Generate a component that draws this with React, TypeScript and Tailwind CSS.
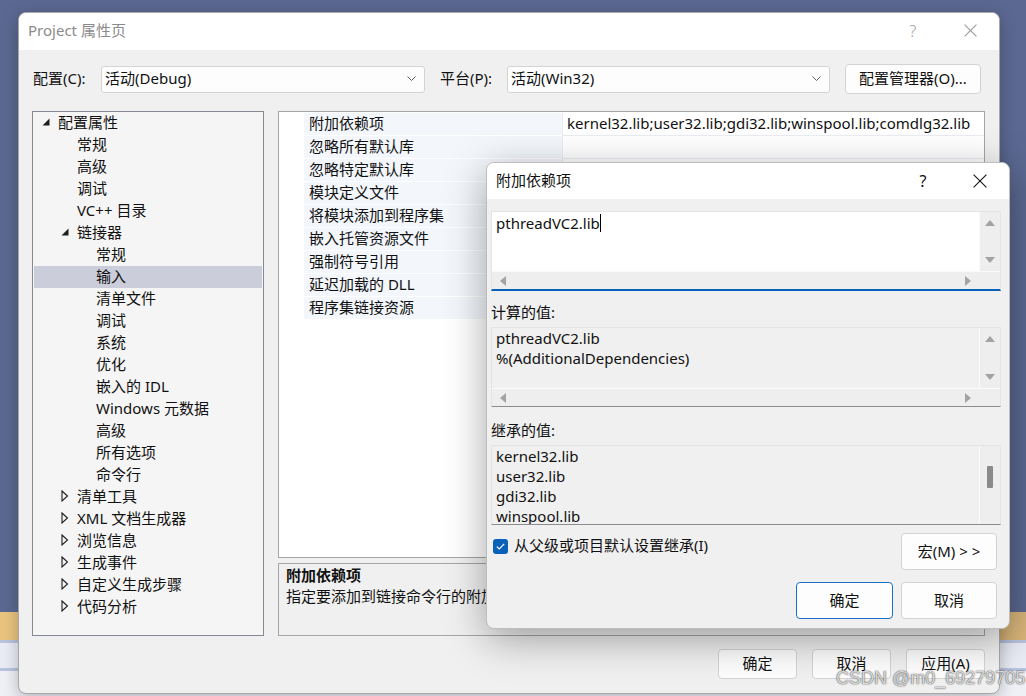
import React from 'react';

// tree rows of the property page
type TreeRow = { t: string; lv: 1 | 2 | 3; tri?: 'open' | 'closed'; sel?: boolean };

const tree: TreeRow[] = [
  { t: '配置属性', lv: 1, tri: 'open' },
  { t: '常规', lv: 2 },
  { t: '高级', lv: 2 },
  { t: '调试', lv: 2 },
  { t: 'VC++ 目录', lv: 2 },
  { t: '链接器', lv: 2, tri: 'open' },
  { t: '常规', lv: 3 },
  { t: '输入', lv: 3, sel: true },
  { t: '清单文件', lv: 3 },
  { t: '调试', lv: 3 },
  { t: '系统', lv: 3 },
  { t: '优化', lv: 3 },
  { t: '嵌入的 IDL', lv: 3 },
  { t: 'Windows 元数据', lv: 3 },
  { t: '高级', lv: 3 },
  { t: '所有选项', lv: 3 },
  { t: '命令行', lv: 3 },
  { t: '清单工具', lv: 2, tri: 'closed' },
  { t: 'XML 文档生成器', lv: 2, tri: 'closed' },
  { t: '浏览信息', lv: 2, tri: 'closed' },
  { t: '生成事件', lv: 2, tri: 'closed' },
  { t: '自定义生成步骤', lv: 2, tri: 'closed' },
  { t: '代码分析', lv: 2, tri: 'closed' },
];

const props = [
  '附加依赖项',
  '忽略所有默认库',
  '忽略特定默认库',
  '模块定义文件',
  '将模块添加到程序集',
  '嵌入托管资源文件',
  '强制符号引用',
  '延迟加载的 DLL',
  '程序集链接资源',
];

const indent: Record<number, string> = { 1: 'pl-[9px]', 2: 'pl-[28px]', 3: 'pl-[47px]' };

function Triangle({ kind }: { kind?: 'open' | 'closed' }) {
  if (kind === 'open') {
    return (
      <svg width="8" height="8" viewBox="0 0 8 8">
        <polygon points="7.5,0.5 7.5,7.5 0.5,7.5" fill="#1e1e1e" />
      </svg>
    );
  }
  if (kind === 'closed') {
    return (
      <svg width="8" height="12" viewBox="0 0 8 12">
        <polygon points="1,1 6.5,6 1,11" fill="none" stroke="#1e1e1e" strokeWidth="1.1" />
      </svg>
    );
  }
  return null;
}

function CloseIcon({ color, size }: { color: string; size: number }) {
  return (
    <svg width={size} height={size} viewBox="0 0 12 12">
      <path d="M0.5 0.5 L11.5 11.5 M11.5 0.5 L0.5 11.5" stroke={color} strokeWidth="1" />
    </svg>
  );
}

function Chevron() {
  return (
    <svg width="9" height="5" viewBox="0 0 9 5">
      <polyline points="0.5,0.5 4.5,4.5 8.5,0.5" fill="none" stroke="#5a5a5a" strokeWidth="1" />
    </svg>
  );
}

function Arrow({ dir }: { dir: 'up' | 'down' | 'left' | 'right' }) {
  const pts = {
    up: '0,6 5,0 10,6',
    down: '0,0 10,0 5,6',
    left: '6,0 6,10 0,5',
    right: '0,0 0,10 6,5',
  }[dir];
  const vertical = dir === 'up' || dir === 'down';
  return (
    <svg width={vertical ? 10 : 6} height={vertical ? 6 : 10} viewBox={vertical ? '0 0 10 6' : '0 0 6 10'}>
      <polygon points={pts} fill="#a3a3a3" />
    </svg>
  );
}

function Combo({ value, w }: { value: string; w: string }) {
  return (
    <div className={`${w} h-[27px] bg-[#fdfdfd] border border-[#d4d4d4] rounded-[3px] flex items-center pl-[3px] pr-[8px] pb-[2px]`}>
      <span className="flex-1">{value}</span>
      <Chevron />
    </div>
  );
}

function Btn({ label, w, h, primary }: { label: string; w: string; h: string; primary?: boolean }) {
  return (
    <div
      className={`${w} ${h} flex items-center justify-center pb-[1px] rounded-[4px] bg-[#fdfdfd] border ${
        primary ? 'border-[#1a6fc4]' : 'border-[#d3d3d3]'
      }`}
    >
      {label}
    </div>
  );
}

function ScrollBox({
  lines,
  editable,
  hscroll,
  thumb,
}: {
  lines: string[];
  editable?: boolean;
  hscroll?: boolean;
  thumb?: boolean;
}) {
  return (
    <div
      className={`h-[80px] flex flex-col border border-[#e4e4e4] overflow-hidden ${
        editable ? 'border-b-2 border-b-[#0a62b8]' : 'border-b-[#8c8c8c]'
      }`}
    >
      <div className="flex-1 flex min-h-0">
        <div className={`flex-1 pl-[4px] leading-[20px] overflow-hidden ${editable ? 'bg-white pt-px' : 'bg-[#f0f0f0]'}`}>
          {lines.map((l, i) => (
            <div key={i} className="whitespace-nowrap flex items-center">
              {l}
              {editable && i === 0 && <span className="inline-block w-px h-[18px] bg-black" />}
            </div>
          ))}
        </div>
        <div className="w-[21px] bg-[#eeeeee] border-l border-[#fafafa] flex flex-col items-center justify-between py-[8px]">
          {thumb ? (
            <div className="w-[6px] h-[22px] bg-[#8a8a8a] rounded-[1px] mt-[12px]" />
          ) : (
            <>
              <Arrow dir="up" />
              <Arrow dir="down" />
            </>
          )}
        </div>
      </div>
      {hscroll && (
        <div className="h-[18px] flex bg-[#eeeeee] border-t border-[#fafafa]">
          <div className="flex-1 flex items-center justify-between px-[8px]">
            <Arrow dir="left" />
            <Arrow dir="right" />
          </div>
          <div className="w-[21px]" />
        </div>
      )}
    </div>
  );
}

function MainWindow() {
  return (
    <div className="absolute left-[18px] top-[12px] w-[982px] h-[682px] rounded-[8px] border border-[#a7a7a7] bg-[#f0f0f0] overflow-hidden flex flex-col shadow-[0_4px_16px_rgba(0,0,0,0.25)]">
      <div className="h-[37px] bg-white flex items-center pl-[9px] pb-[2px] shrink-0">
        <span className="text-[#8b8b8b]">Project 属性页</span>
        <div className="ml-auto mr-[6px] flex gap-[11px]">
          <div className="w-[46px] flex justify-center text-[#9a9a9a] text-[16px] font-light">?</div>
          <div className="w-[46px] flex justify-center items-center">
            <CloseIcon color="#9a9a9a" size={13} />
          </div>
        </div>
      </div>

      <div className="flex-1 flex flex-col px-[13px]">
        <div className="mt-[14px] h-[30px] flex items-center">
          <span className="w-[69px] pl-[1px] pb-[2px]">配置(C):</span>
          <Combo value="活动(Debug)" w="w-[324px]" />
          <span className="w-[67px] ml-[15px] pb-[2px]">平台(P):</span>
          <Combo value="活动(Win32)" w="w-[323px]" />
          <div className="ml-[15px]">
            <Btn label="配置管理器(O)..." w="w-[136px]" h="h-[30px]" />
          </div>
        </div>

        <div className="mt-[17px] flex">
          <div className="w-[232px] h-[525px] border border-[#858991] bg-[#f5f5f5]">
            {tree.map((r, i) => (
              <div
                key={i}
                className={`h-[22px] flex items-center pb-[2px] ${indent[r.lv]} ${r.sel ? 'bg-[#cbcdda] mx-px' : ''}`}
              >
                <div className={`w-[16px] flex items-center ${r.sel ? '-ml-px' : ''}`}>
                  <Triangle kind={r.tri} />
                </div>
                <span>{r.t}</span>
              </div>
            ))}
          </div>

          <div className="ml-[14px] w-[707px] flex flex-col">
            <div className="h-[447px] border border-[#a5a5a5] bg-white pt-[1px] overflow-hidden">
              {props.map((p, i) => (
                <div key={i} className="h-[23px] flex">
                  <div className="w-[25px]" />
                  <div className="w-[258px] bg-[#f3f6fb] border-b border-white pl-[5px] pb-[2px] flex items-center">{p}</div>
                  <div className="flex-1 border-b border-l border-[#e9edf3] pl-[4px] pb-[2px] flex items-center whitespace-nowrap overflow-hidden">
                    {i === 0 ? 'kernel32.lib;user32.lib;gdi32.lib;winspool.lib;comdlg32.lib' : ''}
                  </div>
                </div>
              ))}
            </div>
            <div className="mt-[5px] h-[73px] border border-[#a5a5a5] bg-[#f0f0f0] px-[7px] pt-[1px] leading-[21px]">
              <div className="font-bold">附加依赖项</div>
              <div>指定要添加到链接命令行的附加依赖项。</div>
            </div>
          </div>
        </div>

        <div className="mt-[13px] flex justify-end gap-[15px] pr-px">
          <Btn label="确定" w="w-[79px]" h="h-[30px]" />
          <Btn label="取消" w="w-[79px]" h="h-[30px]" />
          <Btn label="应用(A)" w="w-[79px]" h="h-[30px]" />
        </div>
      </div>
    </div>
  );
}

function SubDialog() {
  return (
    <div className="absolute left-[486px] top-[162px] w-[524px] h-[467px] rounded-[8px] border border-[#bdbdbd] bg-[#f0f0f0] overflow-hidden flex flex-col shadow-[0_10px_40px_rgba(0,0,0,0.35)]">
      <div className="h-[36px] bg-white flex items-center pl-[9px] pb-[1px] shrink-0">
        <span>附加依赖项</span>
        <div className="ml-auto mr-[6px] flex gap-[11px]">
          <div className="w-[46px] flex justify-center text-[16px]">?</div>
          <div className="w-[46px] flex justify-center items-center">
            <CloseIcon color="#1a1a1a" size={14} />
          </div>
        </div>
      </div>

      <div className="flex-1 flex flex-col pl-[4px] pr-[8px]">
        <div className="mt-[12px]">
          <ScrollBox lines={['pthreadVC2.lib']} editable hscroll />
        </div>

        <div className="mt-[11px] h-[20px] leading-[20px]">计算的值:</div>
        <div className="mt-[5px]">
          <ScrollBox lines={['pthreadVC2.lib', '%(AdditionalDependencies)']} hscroll />
        </div>

        <div className="mt-[13px] h-[20px] leading-[20px]">继承的值:</div>
        <div className="mt-[5px]">
          <ScrollBox lines={['kernel32.lib', 'user32.lib', 'gdi32.lib', 'winspool.lib']} thumb />
        </div>

        <div className="mt-[8px] flex">
          <div className="flex items-center gap-[6px] ml-[2px] h-[26px]">
            <div className="w-[15px] h-[15px] rounded-[3px] bg-[#0a62b8] flex items-center justify-center">
              <svg width="9" height="7" viewBox="0 0 9 7">
                <polyline points="0.8,3.6 3.3,6 8.2,0.8" fill="none" stroke="white" strokeWidth="1.2" />
              </svg>
            </div>
            <span className="pb-[2px]">从父级或项目默认设置继承(I)</span>
          </div>
          <div className="ml-auto mr-[4px]">
            <Btn label="宏(M) > >" w="w-[96px]" h="h-[37px]" />
          </div>
        </div>

        <div className="mt-[12px] flex justify-end gap-[8px] mr-[4px]">
          <Btn label="确定" w="w-[97px]" h="h-[37px]" primary />
          <Btn label="取消" w="w-[96px]" h="h-[37px]" />
        </div>
      </div>
    </div>
  );
}

export default function App() {
  return (
    <div className="relative w-[1026px] h-[696px] overflow-hidden text-[15px] text-[#111] font-['Noto_Sans','Noto_Sans_CJK_SC',sans-serif]">
      {/* desktop behind the windows */}
      <div className="h-[612px] bg-[#5b6891]" />
      <div className="h-[28px] bg-gradient-to-r from-[#eac47f] to-[#d9b57a]" />
      <div className="h-[3px] bg-[#b9c3df]" />
      <div className="h-[25px] bg-[#e9ecf5]" />
      <div className="h-[3px] bg-[#b9c3df]" />
      <div className="h-[25px] bg-[#eef0f6]" />

      <MainWindow />
      <SubDialog />

      <div className="absolute left-[836px] top-[666px] text-[18px] leading-[24px] text-white/80 font-['Liberation_Sans',sans-serif] [text-shadow:0_0_1px_rgba(0,0,0,0.8),0_0_2px_rgba(0,0,0,0.4)]">
        CSDN @m0_69279705
      </div>
    </div>
  );
}
